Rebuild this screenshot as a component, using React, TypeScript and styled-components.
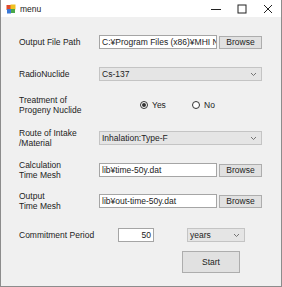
import React from 'react';
import styled, { createGlobalStyle } from 'styled-components';

const Global = createGlobalStyle`
    html, body { margin: 0; padding: 0; background: #6d6d6d; }
    body { font-family: "Liberation Sans", Arial, sans-serif; }
`;

const Window = styled.div`
    width: 282px;
    height: 287px;
    box-sizing: border-box;
    border: 1px solid #8c8c8c;
    border-top: none;
    background: #f0f0f0;
    display: flex;
    flex-direction: column;
    font-size: 8.5px;
    color: #222;
`;

const TitleBar = styled.div`
    height: 17px;
    background: #fff;
    display: flex;
    align-items: center;
    padding-left: 5px;
`;

const Title = styled.span`
    margin-left: 4px;
    flex: 1;
    font-size: 8.5px;
`;

const CaptionButton = styled.div`
    width: 26px;
    height: 17px;
    display: flex;
    align-items: center;
    justify-content: center;
`;

const Form = styled.div`
    padding-left: 18px;
    display: flex;
    flex-direction: column;
`;

const Row = styled.div<{ $top: number; $h: number }>`
    margin-top: ${(p) => p.$top}px;
    height: ${(p) => p.$h}px;
    display: flex;
    align-items: center;
`;

const Label = styled.div<{ $w?: number }>`
    width: ${(p) => p.$w ?? 80}px;
    line-height: 10px;
    flex-shrink: 0;
`;

const TextBox = styled.div<{ $w: number; $right?: boolean }>`
    width: ${(p) => p.$w}px;
    height: 14px;
    box-sizing: border-box;
    background: #fff;
    border: 1px solid #a5a5a5;
    padding: 0 2px;
    display: flex;
    align-items: center;
    justify-content: ${(p) => (p.$right ? 'flex-end' : 'flex-start')};
    white-space: nowrap;
    overflow: hidden;
`;

const Button = styled.div<{ $w: number; $h: number; $left?: number }>`
    width: ${(p) => p.$w}px;
    height: ${(p) => p.$h}px;
    margin-left: ${(p) => p.$left ?? 0}px;
    box-sizing: border-box;
    background: #e1e1e1;
    border: 1px solid #adadad;
    display: flex;
    align-items: center;
    justify-content: center;
`;

const Combo = styled.div<{ $w: number; $left?: number }>`
    width: ${(p) => p.$w}px;
    height: 14px;
    margin-left: ${(p) => p.$left ?? 0}px;
    box-sizing: border-box;
    background: #e5e5e5;
    border: 1px solid #c4c4c4;
    padding: 0 4px 0 2px;
    display: flex;
    align-items: center;
    justify-content: space-between;
`;

const Radio = styled.div<{ $checked?: boolean }>`
    width: 8px;
    height: 8px;
    box-sizing: border-box;
    border-radius: 50%;
    border: 1px solid #333;
    background: #fff;
    display: flex;
    align-items: center;
    justify-content: center;
    margin-right: 4px;
    &::after {
        content: '';
        width: 4px;
        height: 4px;
        border-radius: 50%;
        background: ${(p) => (p.$checked ? '#333' : 'transparent')};
    }
`;

const RadioItem = styled.div<{ $w: number; $left?: number }>`
    width: ${(p) => p.$w}px;
    margin-left: ${(p) => p.$left ?? 0}px;
    display: flex;
    align-items: center;
`;

const Chevron = () => (
    <svg width="7" height="5" viewBox="0 0 7 5">
        <path d="M1 1 L3.5 3.5 L6 1" fill="none" stroke="#666" strokeWidth="0.9" />
    </svg>
);

const AppIcon = () => (
    <svg width="10" height="10" viewBox="0 0 10 10">
        <rect x="0.5" y="1" width="5" height="5" fill="#e04a2a" />
        <rect x="4.5" y="0.5" width="5" height="5" fill="#f0c020" />
        <rect x="1" y="5" width="4" height="4.5" fill="#3a78d8" />
        <rect x="5" y="5" width="4" height="4" fill="#4aa84a" />
    </svg>
);

const App: React.FC = () => (
    <>
        <Global />
        <Window>
            <TitleBar>
                <AppIcon />
                <Title>menu</Title>
                <CaptionButton>
                    <svg width="10" height="10" viewBox="0 0 10 10">
                        <path d="M0 5.5 H10" stroke="#222" strokeWidth="1" />
                    </svg>
                </CaptionButton>
                <CaptionButton>
                    <svg width="10" height="10" viewBox="0 0 10 10">
                        <rect x="1" y="1" width="8" height="8" fill="none" stroke="#222" strokeWidth="1" />
                    </svg>
                </CaptionButton>
                <CaptionButton>
                    <svg width="10" height="10" viewBox="0 0 10 10">
                        <path d="M1 1 L9 9 M9 1 L1 9" stroke="#222" strokeWidth="1" />
                    </svg>
                </CaptionButton>
            </TitleBar>
            <Form>
                <Row $top={18} $h={14}>
                    <Label>Output File Path</Label>
                    <TextBox $w={118}>C:¥Program Files (x86)¥MHI N</TextBox>
                    <Button $w={43} $h={13} $left={2}>
                        Browse
                    </Button>
                </Row>
                <Row $top={18} $h={14}>
                    <Label>RadioNuclide</Label>
                    <Combo $w={163}>
                        <span>Cs-137</span>
                        <Chevron />
                    </Combo>
                </Row>
                <Row $top={14} $h={20}>
                    <Label>
                        Treatment of
                        <br />
                        Progeny Nuclide
                    </Label>
                    <RadioItem $w={52} $left={41}>
                        <Radio $checked />
                        Yes
                    </RadioItem>
                    <RadioItem $w={40}>
                        <Radio />
                        No
                    </RadioItem>
                </Row>
                <Row $top={13} $h={20}>
                    <Label>
                        Route of Intake
                        <br />
                        /Material
                    </Label>
                    <Combo $w={163}>
                        <span>Inhalation:Type-F</span>
                        <Chevron />
                    </Combo>
                </Row>
                <Row $top={12} $h={20}>
                    <Label>
                        Calculation
                        <br />
                        Time Mesh
                    </Label>
                    <TextBox $w={118}>lib¥time-50y.dat</TextBox>
                    <Button $w={43} $h={13} $left={2}>
                        Browse
                    </Button>
                </Row>
                <Row $top={11} $h={20}>
                    <Label>
                        Output
                        <br />
                        Time Mesh
                    </Label>
                    <TextBox $w={118}>lib¥out-time-50y.dat</TextBox>
                    <Button $w={43} $h={13} $left={2}>
                        Browse
                    </Button>
                </Row>
                <Row $top={17} $h={14}>
                    <Label $w={99}>Commitment Period</Label>
                    <TextBox $w={36} $right>
                        50
                    </TextBox>
                    <Combo $w={58} $left={33}>
                        <span>years</span>
                        <Chevron />
                    </Combo>
                </Row>
                <Row $top={9} $h={22}>
                    <Button $w={58} $h={22} $left={163}>
                        Start
                    </Button>
                </Row>
            </Form>
        </Window>
    </>
);

export default App;
